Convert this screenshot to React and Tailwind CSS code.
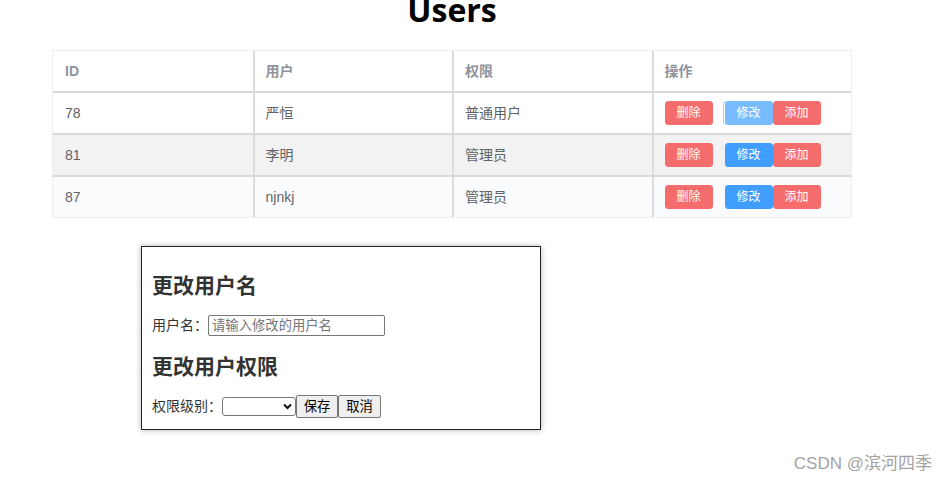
import React from "react";

const users = [
  { id: 78, name: "严恒", role: "普通用户", bg: "bg-white", focus: true },
  { id: 81, name: "李明", role: "管理员", bg: "bg-[#f2f2f2]", focus: false },
  { id: 87, name: "njnkj", role: "管理员", bg: "bg-[#fafbfc]", focus: false },
];

const cjk = "font-['Liberation_Sans','Noto_Sans_CJK_SC',sans-serif]";

function SmallButton({ color, children, className = "" }) {
  const colors = {
    red: "bg-[#f56c6c] border-[#f56c6c]",
    blue: "bg-[#409eff] border-[#409eff]",
    light: "bg-[#79bbff] border-[#79bbff] shadow-[-1px_0_0_0_#fff,-2px_0_0_0_#a0cfff]",
  };
  return (
    <button className={`h-[24px] w-[48px] rounded-[3px] border text-[12px] leading-none text-white ${colors[color]} ${className}`}>
      {children}
    </button>
  );
}

export default function App() {
  return (
    <div className={`relative h-[484px] w-[948px] overflow-hidden bg-white ${cjk}`}>
      <div className="flex w-[904px] flex-col items-center">
        <h1 className="-mt-[10px] font-['Open_Sans',sans-serif] text-[32px] font-bold leading-[40px] text-black">Users</h1>
        <div className="mt-[20px] w-[800px] border border-[#ebeef5] text-[14px]">
          <div className="flex h-[40px] items-center bg-white font-bold text-[#909399]">
            {["ID", "用户", "权限", "操作"].map((h, i) => (
              <div key={h} className={`flex h-full w-[200px] items-center ${i > 0 ? "border-l-2 border-[#dcdcdc] pl-[11px]" : "pl-[12px]"}`}>
                {h}
              </div>
            ))}
          </div>
          {users.map((u) => (
            <div key={u.id} className={`flex h-[42px] items-center border-t-2 border-[#d9d9d9] text-[#606266] ${u.bg}`}>
              <div className="flex h-full w-[200px] items-center pl-[12px]">{u.id}</div>
              <div className="flex h-full w-[200px] items-center border-l-2 border-[#dcdcdc] pl-[11px]">{u.name}</div>
              <div className="flex h-full w-[200px] items-center border-l-2 border-[#dcdcdc] pl-[11px]">{u.role}</div>
              <div className="flex h-full w-[200px] items-center border-l-2 border-[#dcdcdc] pl-[11px]">
                <SmallButton color="red">删除</SmallButton>
                <SmallButton color={u.focus ? "light" : "blue"} className="ml-[12px]">修改</SmallButton>
                <SmallButton color="red">添加</SmallButton>
              </div>
            </div>
          ))}
        </div>
      </div>

      <div className="ml-[141px] mt-[28px] flex h-[184px] w-[400px] flex-col border border-[#222] bg-white px-[10px] pt-[25px] text-[#333] shadow-[0_0_6px_rgba(0,0,0,0.3)]">
        <h3 className="text-[21px] font-bold leading-[28px]">更改用户名</h3>
        <div className="mt-[15px] flex h-[21px] items-center text-[14px]">
          <span>用户名：</span>
          <input
            placeholder="请输入修改的用户名"
            className="h-[21px] w-[177px] rounded-[2px] border border-[#767676] px-[3px] text-[13.33px] placeholder:text-[#757575]"
          />
        </div>
        <h3 className="mt-[17px] text-[21px] font-bold leading-[28px]">更改用户权限</h3>
        <div className="mt-[14px] flex h-[23px] items-center text-[14px]">
          <span>权限级别：</span>
          <div className="relative h-[19px] w-[74px]">
            <select className="h-full w-full appearance-none rounded-[3px] border border-[#767676] bg-white" />
            <svg className="pointer-events-none absolute right-[4px] top-[6px]" width="9" height="7" viewBox="0 0 9 7">
              <path d="M1 1.5 L4.5 5 L8 1.5" fill="none" stroke="#111" strokeWidth="2" />
            </svg>
          </div>
          <button className="h-[23px] w-[42px] rounded-[2px] border border-[#767676] bg-[#efefef] text-[13.33px] text-black">保存</button>
          <button className="h-[23px] w-[43px] rounded-[2px] border border-[#767676] bg-[#efefef] text-[13.33px] text-black">取消</button>
        </div>
      </div>

      <div className="absolute bottom-[8px] right-[16px] text-[17px] text-[#a3a3a3]">CSDN @滨河四季</div>
    </div>
  );
}
